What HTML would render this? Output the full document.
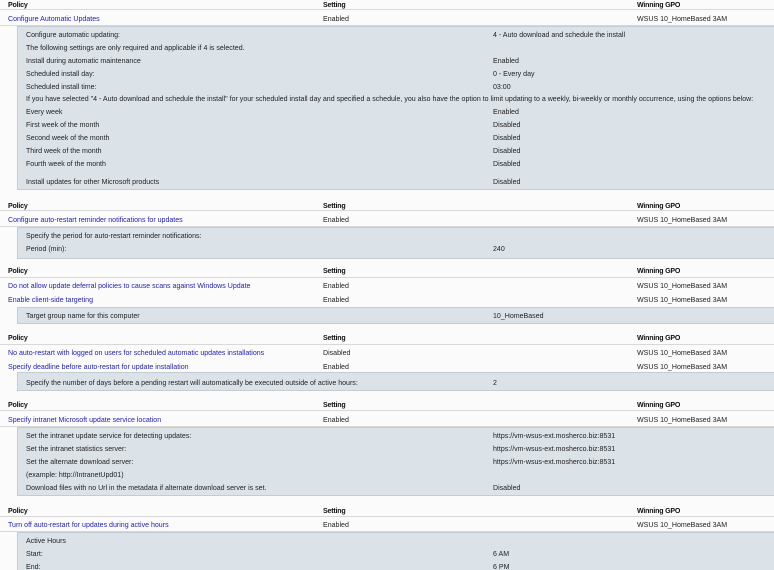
<!DOCTYPE html>
<html style="overflow:hidden;width:774px;height:570px"><head><meta charset="utf-8"><style>
html,body{margin:0;width:774px;height:570px;overflow:hidden}
body{background:#fbfbfb;font-family:"Liberation Sans",Arial,sans-serif;font-size:7.05px;color:#222;position:relative}
.t{position:absolute;line-height:10px;white-space:nowrap;margin-top:1.5px}
.h{font-weight:bold;color:#111;letter-spacing:-0.2px}
.a{color:#2222aa}
.ln{position:absolute;left:0;width:774px;height:1px;background:#d8d8d8}
.box{position:absolute;left:17px;right:0;background:#dbe3e9;border:1px solid #c4ccd2;border-right:none}
</style></head><body>

<div class="t h" style="left:8px;top:-1px">Policy</div><div class="t h" style="left:323px;top:-1px">Setting</div><div class="t h" style="left:637px;top:-1px">Winning GPO</div>
<div class="ln" style="top:9px"></div>
<div class="t a" style="left:8px;top:13px">Configure Automatic Updates</div><div class="t" style="left:323px;top:13px">Enabled</div><div class="t" style="left:637px;top:13px">WSUS 10_HomeBased 3AM</div>
<div class="ln" style="top:25px"></div>
<div class="box" style="top:26px;height:162px"></div>
<div class="t" style="left:26px;top:29px">Configure automatic updating:</div><div class="t" style="left:493px;top:29px">4 - Auto download and schedule the install</div>
<div class="t" style="left:26px;top:42px">The following settings are only required and applicable if 4 is selected.</div>
<div class="t" style="left:26px;top:55px">Install during automatic maintenance</div><div class="t" style="left:493px;top:55px">Enabled</div>
<div class="t" style="left:26px;top:68px">Scheduled install day:</div><div class="t" style="left:493px;top:68px">0 - Every day</div>
<div class="t" style="left:26px;top:81px">Scheduled install time:</div><div class="t" style="left:493px;top:81px">03:00</div>
<div class="t" style="left:26px;top:93px">If you have selected "4 - Auto download and schedule the install" for your scheduled install day and specified a schedule, you also have the option to limit updating to a weekly, bi-weekly or monthly occurrence, using the options below:</div>
<div class="t" style="left:26px;top:106px">Every week</div><div class="t" style="left:493px;top:106px">Enabled</div>
<div class="t" style="left:26px;top:119px">First week of the month</div><div class="t" style="left:493px;top:119px">Disabled</div>
<div class="t" style="left:26px;top:132px">Second week of the month</div><div class="t" style="left:493px;top:132px">Disabled</div>
<div class="t" style="left:26px;top:145px">Third week of the month</div><div class="t" style="left:493px;top:145px">Disabled</div>
<div class="t" style="left:26px;top:158px">Fourth week of the month</div><div class="t" style="left:493px;top:158px">Disabled</div>
<div class="t" style="left:26px;top:176px">Install updates for other Microsoft products</div><div class="t" style="left:493px;top:176px">Disabled</div>

<div class="t h" style="left:8px;top:200px">Policy</div><div class="t h" style="left:323px;top:200px">Setting</div><div class="t h" style="left:637px;top:200px">Winning GPO</div>
<div class="ln" style="top:210px"></div>
<div class="t a" style="left:8px;top:214px">Configure auto-restart reminder notifications for updates</div><div class="t" style="left:323px;top:214px">Enabled</div><div class="t" style="left:637px;top:214px">WSUS 10_HomeBased 3AM</div>
<div class="ln" style="top:226px"></div>
<div class="box" style="top:227px;height:30px"></div>
<div class="t" style="left:26px;top:230px">Specify the period for auto-restart reminder notifications:</div>
<div class="t" style="left:26px;top:243px">Period (min):</div><div class="t" style="left:493px;top:243px">240</div>

<div class="t h" style="left:8px;top:265px">Policy</div><div class="t h" style="left:323px;top:265px">Setting</div><div class="t h" style="left:637px;top:265px">Winning GPO</div>
<div class="ln" style="top:277px"></div>
<div class="t a" style="left:8px;top:280px">Do not allow update deferral policies to cause scans against Windows Update</div><div class="t" style="left:323px;top:280px">Enabled</div><div class="t" style="left:637px;top:280px">WSUS 10_HomeBased 3AM</div>
<div class="t a" style="left:8px;top:294px">Enable client-side targeting</div><div class="t" style="left:323px;top:294px">Enabled</div><div class="t" style="left:637px;top:294px">WSUS 10_HomeBased 3AM</div>
<div class="box" style="top:307px;height:15px"></div>
<div class="t" style="left:26px;top:310px">Target group name for this computer</div><div class="t" style="left:493px;top:310px">10_HomeBased</div>

<div class="t h" style="left:8px;top:332px">Policy</div><div class="t h" style="left:323px;top:332px">Setting</div><div class="t h" style="left:637px;top:332px">Winning GPO</div>
<div class="ln" style="top:344px"></div>
<div class="t a" style="left:8px;top:347px">No auto-restart with logged on users for scheduled automatic updates installations</div><div class="t" style="left:323px;top:347px">Disabled</div><div class="t" style="left:637px;top:347px">WSUS 10_HomeBased 3AM</div>
<div class="t a" style="left:8px;top:361px">Specify deadline before auto-restart for update installation</div><div class="t" style="left:323px;top:361px">Enabled</div><div class="t" style="left:637px;top:361px">WSUS 10_HomeBased 3AM</div>
<div class="box" style="top:372px;height:17px"></div>
<div class="t" style="left:26px;top:377px">Specify the number of days before a pending restart will automatically be executed outside of active hours:</div><div class="t" style="left:493px;top:377px">2</div>

<div class="t h" style="left:8px;top:399px">Policy</div><div class="t h" style="left:323px;top:399px">Setting</div><div class="t h" style="left:637px;top:399px">Winning GPO</div>
<div class="ln" style="top:410px"></div>
<div class="t a" style="left:8px;top:414px">Specify intranet Microsoft update service location</div><div class="t" style="left:323px;top:414px">Enabled</div><div class="t" style="left:637px;top:414px">WSUS 10_HomeBased 3AM</div>
<div class="ln" style="top:426px"></div>
<div class="box" style="top:427px;height:67px"></div>
<div class="t" style="left:26px;top:430px">Set the intranet update service for detecting updates:</div><div class="t" style="left:493px;top:430px">https://vm-wsus-ext.mosherco.biz:8531</div>
<div class="t" style="left:26px;top:443px">Set the intranet statistics server:</div><div class="t" style="left:493px;top:443px">https://vm-wsus-ext.mosherco.biz:8531</div>
<div class="t" style="left:26px;top:456px">Set the alternate download server:</div><div class="t" style="left:493px;top:456px">https://vm-wsus-ext.mosherco.biz:8531</div>
<div class="t" style="left:26px;top:469px">(example: http://IntranetUpd01)</div>
<div class="t" style="left:26px;top:482px">Download files with no Url in the metadata if alternate download server is set.</div><div class="t" style="left:493px;top:482px">Disabled</div>

<div class="t h" style="left:8px;top:505px">Policy</div><div class="t h" style="left:323px;top:505px">Setting</div><div class="t h" style="left:637px;top:505px">Winning GPO</div>
<div class="ln" style="top:516px"></div>
<div class="t a" style="left:8px;top:519px">Turn off auto-restart for updates during active hours</div><div class="t" style="left:323px;top:519px">Enabled</div><div class="t" style="left:637px;top:519px">WSUS 10_HomeBased 3AM</div>
<div class="ln" style="top:531px"></div>
<div class="box" style="top:532px;height:40px"></div>
<div class="t" style="left:26px;top:535px">Active Hours</div>
<div class="t" style="left:26px;top:548px">Start:</div><div class="t" style="left:493px;top:548px">6 AM</div>
<div class="t" style="left:26px;top:561px">End:</div><div class="t" style="left:493px;top:561px">6 PM</div>

</body></html>
